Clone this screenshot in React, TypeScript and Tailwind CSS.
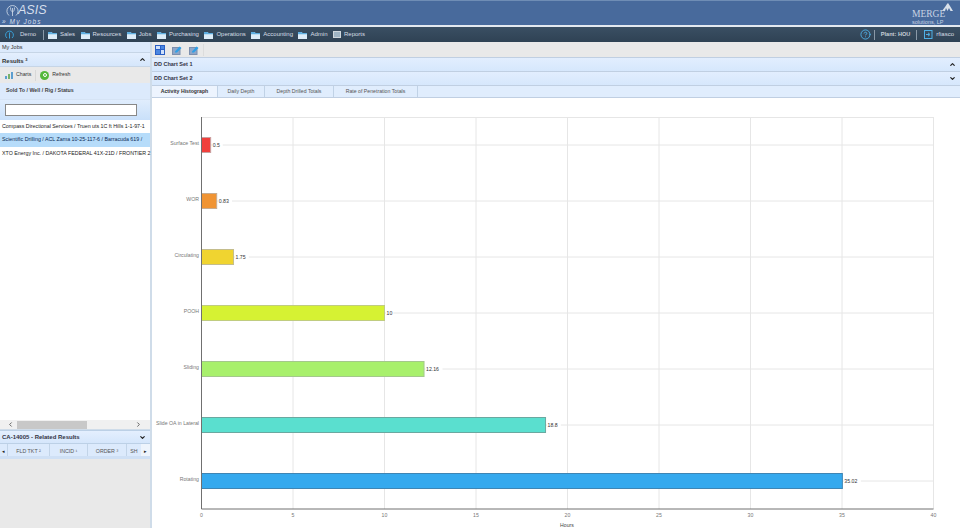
import { ChevronDown, ChevronLeft, ChevronRight, ChevronUp, CircleHelp } from 'lucide-react'

const font = { fontFamily: '"Liberation Sans", Arial, sans-serif' }

const menu = ['Sales', 'Resources', 'Jobs', 'Purchasing', 'Operations', 'Accounting', 'Admin']

const bars = [
  { label: 'Surface Test', value: 0.5, text: '0.5', color: '#f0403c', stroke: '#c9a0a0' },
  { label: 'WOR', value: 0.83, text: '0.83', color: '#f09433', stroke: '#c8ac8e' },
  { label: 'Circulating', value: 1.75, text: '1.75', color: '#f0d430', stroke: '#c4bd8c' },
  { label: 'POOH', value: 10, text: '10', color: '#d6f233', stroke: '#c0cc80' },
  { label: 'Sliding', value: 12.16, text: '12.16', color: '#a8f06c', stroke: '#a4c88c' },
  { label: 'Slide OA in Lateral', value: 18.8, text: '18.8', color: '#5adfcf', stroke: '#6aa8a0' },
  { label: 'Rotating', value: 35.02, text: '35.02', color: '#35a9ee', stroke: '#3f85b4' },
]

const X0 = 201.5
const UNIT = 18.3
const TOP = 117
const BOTTOM = 509

function Chart() {
  const ticks = [0, 5, 10, 15, 20, 25, 30, 35, 40]
  return (
    <svg width="808" height="430" viewBox="152 98 808 430" className="block">
      {ticks.slice(1).map((t) => (
        <line key={t} x1={X0 + t * UNIT} x2={X0 + t * UNIT} y1={TOP} y2={BOTTOM} stroke="#e6e6e6" />
      ))}
      <line x1={X0} x2={X0 + 40 * UNIT} y1={TOP + 0.5} y2={TOP + 0.5} stroke="#e6e6e6" />
      {bars.map((b, i) => {
        const y = Math.round(145 + i * 55.92) + 0.5
        const w = b.value * UNIT
        return (
          <g key={b.label}>
            <line x1={X0} x2={X0 + 40 * UNIT} y1={y - 0.5} y2={y - 0.5} stroke="#e6e6e6" />
            <text x={X0 - 2.5} y={y - 0.5} textAnchor="end" fontSize="5.2" fill="#777">
              {b.label}
            </text>
            <rect x={X0} y={y - 8} width={w} height={15} fill={b.color} stroke={b.stroke} strokeWidth="1" />
            <rect x={X0 + w + 1.5} y={y - 3.5} width={b.text.length * 3.2 + 1} height={6} fill="#fff" />
            <text x={X0 + w + 2} y={y + 1.5} fontSize="5.2" fill="#333">
              {b.text}
            </text>
          </g>
        )
      })}
      <line x1={X0} x2={X0} y1={TOP} y2={BOTTOM} stroke="#707070" />
      <line x1={X0} x2={X0 + 40 * UNIT} y1={BOTTOM} y2={BOTTOM} stroke="#707070" />
      {ticks.map((t) => (
        <text key={t} x={X0 + t * UNIT} y={516.5} textAnchor="middle" fontSize="5.2" fill="#777">
          {t}
        </text>
      ))}
      <text x={567} y={526.5} textAnchor="middle" fontSize="5.2" fill="#444">
        Hours
      </text>
    </svg>
  )
}

function FolderIcon() {
  return (
    <svg width="9" height="8" viewBox="0 0 9 8" className="shrink-0">
      <path d="M0 1h3.5l1 1H9v6H0z" fill="#dcecf8" />
      <path d="M0 1h3.5l1 1H9v1.2H0z" fill="#5eaee0" />
    </svg>
  )
}

function PencilIcon() {
  return (
    <svg width="10" height="10" viewBox="0 0 10 10">
      <rect x="0.5" y="2.5" width="7.5" height="7" fill="#8fa6c8" stroke="#7c8fae" />
      <path d="M3 6.5L7.5 1.5l2 1.5L5 7.5H3z" fill="#2f9fe6" />
    </svg>
  )
}

function Header() {
  return (
    <div className="flex h-[27px] items-start justify-between border-t border-[#6f8db5] border-b-2 border-b-[#e3e9f0] bg-[#486a9c]">
      <div className="ml-[2px] flex w-[46px] flex-col text-[#d5dfec]">
        <div className="ml-[4px] mt-[3px] flex h-[13px] items-center">
          <svg width="13" height="13" viewBox="0 0 13 13" className="shrink-0">
            <path d="M3 11.5A5.6 5.6 0 1 1 10 11.5" fill="none" stroke="#d5dfec" strokeWidth="0.8" />
            <path d="M6.5 4v8M4.5 3.5c0 3 1 4 2 4.5M8.5 3.5c0 3-1 4-2 4.5" fill="none" stroke="#d5dfec" strokeWidth="0.8" />
          </svg>
          <span className="ml-[-1px] text-[12.5px] italic leading-[13px]">ASIS</span>
        </div>
        <span className="mt-[1px] whitespace-nowrap text-[6.5px] italic leading-[7px] tracking-[1.1px]">
          » My Jobs
        </span>
      </div>
      <div className="mr-[7px] flex w-[41px] flex-col items-start text-[#c8d4e4]">
        <svg width="11" height="8" viewBox="0 0 11 8" className="ml-[30px] mt-[2px]">
          <path d="M0 8 L3 4 L5 1 L6 0 L8 3 L11 8 L8.5 8 L7 5 L5.5 8 L4 5 L3 8 Z" fill="#d8e0ea" />
        </svg>
        <span className="-mt-[1px] text-[9.5px] leading-[8px] [font-family:'Liberation_Serif',serif]">MERGE</span>
        <span className="mt-[1px] text-[5.5px] leading-[6px]">solutions, LP</span>
      </div>
    </div>
  )
}

function NavBar() {
  return (
    <div className="flex h-[15px] items-center justify-between bg-[linear-gradient(#3a4f63,#2f4254)] text-[6px] text-[#d8dfe6]">
      <div className="flex items-center">
        <svg width="9" height="9" viewBox="0 0 9 9" className="ml-[5px]">
          <path d="M2 8A3.9 3.9 0 1 1 7 8" fill="none" stroke="#39a0d8" />
          <path d="M4.5 2.5v6" stroke="#39a0d8" />
        </svg>
        <span className="ml-[6px]">Demo</span>
        <div className="ml-[7px] mr-[4px] h-[10px] w-px bg-[#8a99a8]" />
        <div className="flex items-center gap-[5.5px]">
          {menu.map((m) => (
            <div key={m} className="flex items-center gap-[3px]">
              <FolderIcon />
              <span>{m}</span>
            </div>
          ))}
          <div className="flex items-center gap-[3px]">
            <div className="h-[7px] w-[8px] border border-[#cfd6dc] bg-[#9fb4c4]" />
            <span>Reports</span>
          </div>
        </div>
      </div>
      <div className="mr-[6px] flex items-center">
        <CircleHelp size={11} className="text-[#4fb0e6]" />
        <div className="ml-[3px] mr-[6px] h-[10px] w-px bg-[#8a99a8]" />
        <span className="text-[5.6px] font-bold text-[#c8d0d8]">Plant: HOU</span>
        <div className="mx-[6px] h-[10px] w-px bg-[#8a99a8]" />
        <svg width="9" height="9" viewBox="0 0 9 9" className="ml-[1px]">
          <rect x="0.5" y="0.5" width="7.5" height="8" fill="none" stroke="#4fb0e6" />
          <path d="M2 4.5h3M4 2.8l2 1.7-2 1.7" fill="none" stroke="#4fb0e6" />
        </svg>
        <span className="ml-[3px]">rfiasco</span>
      </div>
    </div>
  )
}

function Sidebar() {
  return (
    <div className="flex w-[150px] shrink-0 flex-col text-[5.5px] text-[#333]">
      <div className="flex h-[11px] items-center border-b border-[#c6d5e6] bg-[#dceafc] pl-[2px]">My Jobs</div>
      <div className="flex h-[14px] items-center justify-between border-b border-[#c6d5e6] bg-[linear-gradient(#e4effe,#d5e6fb)] px-[2px] font-bold">
        <span className="pt-[3px] text-[6px]">
          Results <sup className="text-[4px]">3</sup>
        </span>
        <ChevronUp size={7} strokeWidth={4} className="mr-[2px] text-[#222]" />
      </div>
      <div className="flex h-[16px] items-center bg-[#e9e9e9] pl-[5px]">
        <svg width="8" height="8" viewBox="0 0 8 8">
          <rect x="0" y="5" width="2" height="3" fill="#5c9fd0" />
          <rect x="3" y="3" width="2" height="5" fill="#79b26b" />
          <rect x="6" y="1" width="2" height="7" fill="#5c9fd0" />
        </svg>
        <span className="ml-[3px] text-[5.2px]">Charts</span>
        <div className="ml-[4px] mr-[4px] h-[11px] w-px bg-[#d8d8d8]" />
        <div className="flex h-[9px] w-[9px] items-center justify-center rounded-full bg-[#54b83c]">
          <div className="h-[4px] w-[4px] rounded-full border border-white" />
        </div>
        <span className="ml-[3px] text-[5.2px]">Refresh</span>
      </div>
      <div className="flex h-[17px] items-center border-b border-[#d6e4f5] bg-[#dceafc] pb-[1px] pl-[6px] text-[5.3px] font-bold text-[#444]">
        Sold To / Well / Rig / Status
      </div>
      <div className="h-[20px] bg-[linear-gradient(#e0edfd,#c9e0fa)] px-[5px] pt-[4px]">
        <div className="h-[12px] w-[132px] border border-[#888] bg-white" />
      </div>
      <div className="flex h-[300px] flex-col bg-white text-[5.3px] text-[#222]">
        <div className="flex h-[13px] items-center whitespace-nowrap pl-[2px]">
          Compass Directional Services / Truen uts 1C ft Hills 1-1-97-1
        </div>
        <div className="flex h-[14px] items-center whitespace-nowrap bg-[#b6dcfa] pl-[2px] text-[#0d2a55]">
          Scientific Drilling / ACL Zama 10-25-117-6 / Barracuda 619 /
        </div>
        <div className="flex h-[14px] items-center whitespace-nowrap pl-[2px]">
          XTO Energy Inc. / DAKOTA FEDERAL 41X-21D / FRONTIER 2
        </div>
      </div>
      <div className="flex h-[9px] items-center bg-[#f0f0f0]">
        <ChevronLeft size={7} strokeWidth={3} className="ml-[7px] text-[#555]" />
        <div className="ml-[3px] h-[8px] w-[70px] bg-[#c8c8c8]" />
        <div className="flex-1" />
        <ChevronRight size={7} strokeWidth={3} className="mr-[8px] text-[#555]" />
      </div>
      <div className="mt-[1px] flex h-[14px] items-center justify-between border-y border-[#bcd0e6] bg-[linear-gradient(#e4effe,#d5e6fb)] px-[2px] text-[6px] font-bold text-[#334]">
        <span>CA-14005 - Related Results</span>
        <ChevronDown size={7} strokeWidth={4} className="mr-[2px] text-[#222]" />
      </div>
      <div className="flex h-[15px] items-stretch border-b-[3px] border-[#cfe0f5] bg-[#dceafc] text-[5.3px] text-[#555]">
        <div className="flex w-[7px] items-center justify-center pt-[4px] text-[#222]">◂</div>
        <div className="flex w-[42px] items-center justify-center border-l border-[#c2d4e8] pt-[4px]">FLD TKT ²</div>
        <div className="flex w-[38px] items-center justify-center border-l border-[#c2d4e8] pt-[4px]">INCID ¹</div>
        <div className="flex w-[39px] items-center justify-center border-l border-[#c2d4e8] pt-[4px]">ORDER ³</div>
        <div className="flex w-[15px] items-center justify-center border-l border-[#c2d4e8] pt-[4px]">SH</div>
        <div className="flex w-[9px] items-center justify-center bg-[#eef4fc] pt-[4px] text-[#222]">▸</div>
      </div>
      <div className="flex-1 bg-[#e9e9e9]" />
    </div>
  )
}

function SetBar({ title, up }: { title: string; up: boolean }) {
  return (
    <div className="flex h-[14px] items-center justify-between border-t border-[#c0cfe2] bg-[linear-gradient(#e2eefe,#d6e7fc)] px-[2px] text-[5.5px] font-bold text-[#334]">
      <span>{title}</span>
      {up ? (
        <ChevronUp size={7} strokeWidth={4} className="mr-[2px] text-[#222]" />
      ) : (
        <ChevronDown size={7} strokeWidth={4} className="mr-[2px] text-[#222]" />
      )}
    </div>
  )
}

function Main() {
  const tabs = ['Daily Depth', 'Depth Drilled Totals', 'Rate of Penetration Totals']
  const widths = ['w-[47px]', 'w-[69px]', 'w-[84px]']
  return (
    <div className="ml-[2px] flex min-w-0 flex-1 flex-col">
      <div className="flex h-[15px] items-center gap-[7px] bg-[#e9e9e9] pl-[3px]">
        <div className="grid h-[10px] w-[10px] grid-cols-2 gap-px border border-[#2a5fc4] bg-[#2a5fc4]">
          <div className="bg-[#cfe0fa]" />
          <div className="bg-[#4a86e0]" />
          <div className="bg-[#4a86e0]" />
          <div className="bg-[#cfe0fa]" />
        </div>
        <PencilIcon />
        <PencilIcon />
        <div className="ml-[-3px] h-[12px] w-px bg-[#dcdcdc]" />
      </div>
      <SetBar title="DD Chart Set 1" up />
      <SetBar title="DD Chart Set 2" up={false} />
      <div className="flex h-[13px] items-stretch border-y border-[#c0cfe2] bg-[#e0edfd] text-[5.2px] text-[#555]">
        <div className="flex w-[65px] items-center justify-center bg-[#edf4fe] font-bold text-[#333]">
          Activity Histograph
        </div>
        {tabs.map((t, i) => (
          <div key={t} className={`flex items-center justify-center border-l border-[#c0d2e6] ${widths[i]}`}>
            {t}
          </div>
        ))}
        <div className="border-l border-[#c0d2e6]" />
      </div>
      <div className="h-[430px] overflow-hidden bg-white">
        <Chart />
      </div>
    </div>
  )
}

export default function App() {
  return (
    <div className="flex h-[528px] w-[960px] flex-col overflow-hidden bg-[#cfdce9]" style={font}>
      <Header />
      <NavBar />
      <div className="flex min-h-0 flex-1">
        <Sidebar />
        <Main />
      </div>
    </div>
  )
}
